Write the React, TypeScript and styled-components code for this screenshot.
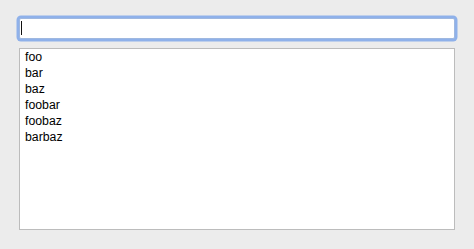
import React from "react";
import styled, { createGlobalStyle } from "styled-components";

const Global = createGlobalStyle`
  html, body { margin: 0; padding: 0; background: #ececec; }
  body { font-family: "Liberation Sans", Arial, Helvetica, sans-serif; }
`;

const Page = styled.div`
  width: 474px;
  height: 249px;
  box-sizing: border-box;
  padding: 18px 0 0 19px;
  display: flex;
  flex-direction: column;
  gap: 9px;
`;

const FieldWrap = styled.div`
  position: relative;
  width: 436px;
  height: 21px;
`;

const Field = styled.input`
  width: 436px;
  height: 21px;
  box-sizing: border-box;
  margin: 0;
  padding: 0 2px;
  border: 1px solid #9fb8e0;
  border-radius: 2px;
  background: #ffffff;
  box-shadow: 0 0 0 2.5px #8fb1ea;
  font-family: "Liberation Sans", Arial, sans-serif;
  font-size: 12px;
  color: #000;
  outline: none;
  caret-color: transparent;
`;

const Caret = styled.span`
  position: absolute;
  left: 2px;
  top: 3px;
  width: 1px;
  height: 14px;
  background: #111;
  pointer-events: none;
`;

const List = styled.ul`
  list-style: none;
  margin: 0;
  padding: 0 0 0 5px;
  width: 436px;
  height: 182px;
  box-sizing: border-box;
  background: #ffffff;
  border: 1px solid #bcbcbc;
`;

const Item = styled.li`
  font-size: 12.3px;
  line-height: 16px;
  height: 16px;
  color: #000;
`;

const items = ["foo", "bar", "baz", "foobar", "foobaz", "barbaz"];

export default function App() {
  return (
    <>
      <Global />
      <Page>
        <FieldWrap>
          <Field autoFocus defaultValue="" />
          <Caret />
        </FieldWrap>
        <List>
          {items.map((t) => (
            <Item key={t}>{t}</Item>
          ))}
        </List>
      </Page>
    </>
  );
}
